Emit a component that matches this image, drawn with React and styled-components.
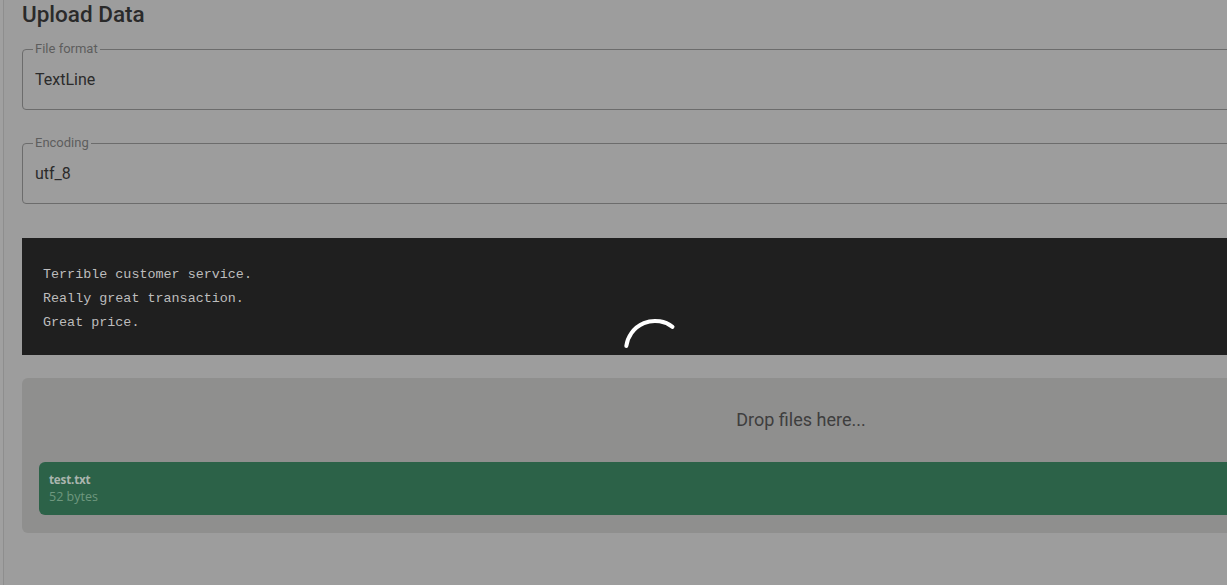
import React from "react";
import styled, { createGlobalStyle } from "styled-components";

const Global = createGlobalStyle`
  html, body { margin: 0; padding: 0; overflow: hidden; background: #9d9d9d; }
  body { font-family: Roboto, "Noto Sans", sans-serif; width: 1227px; height: 585px; }
  #root { height: 585px; }
`;

const Shell = styled.div`
  display: flex;
  height: 585px;
  position: relative;
`;

const Rail = styled.div`
  width: 3px;
  flex: none;
  background: #a0a0a0;
  border-right: 1px solid #8e8e8e;
`;

const Main = styled.main`
  flex: none;
  width: 1558px;
  padding: 0 0 0 18px;
  display: flex;
  flex-direction: column;
`;

const Title = styled.h2`
  margin: 0;
  font-size: 22.5px;
  font-weight: 500;
  line-height: 28px;
  color: #2a2a2a;
`;

const Stack = styled.div`
  display: flex;
  flex-direction: column;
  gap: 27px;
  margin-top: 15px;
`;

const Field = styled.fieldset`
  margin: 0;
  padding: 0 12px 20px;
  min-width: 0;
  border: 1px solid #6c6c6c;
  border-radius: 4px;
`;

const Legend = styled.legend`
  padding: 0 2px;
  margin-left: -2px;
  font-size: 13px;
  line-height: 12px;
  color: #5d5d5d;
`;

const Value = styled.div`
  font-size: 16px;
  line-height: 19px;
  margin-top: 15px;
  color: #2b2b2b;
`;

const Code = styled.pre`
  margin: 34px 0 0;
  background: #1f1f1f;
  color: #bdbdbd;
  font-family: "Liberation Mono", "DejaVu Sans Mono", monospace;
  font-size: 13.4px;
  line-height: 24px;
  padding: 25px 21px 20px;
`;

const Drop = styled.div`
  margin-top: 23px;
  background: #8f8f8e;
  border-radius: 6px;
  padding: 29px 0 18px 17px;
  display: flex;
  flex-direction: column;
`;

const DropText = styled.div`
  text-align: center;
  font-size: 18px;
  line-height: 26px;
  color: #3e3e3e;
  margin-bottom: 29px;
  padding-right: 17px;
`;

const FileCard = styled.div`
  background: #2c6248;
  border-radius: 6px;
  padding: 9px 10px 10px;
  font-family: "Open Sans", "Noto Sans", sans-serif;
  font-size: 12.5px;
  line-height: 17px;
`;

const FileName = styled.div`
  font-weight: 700;
  font-size: 11.7px;
  color: #aab5ae;
  letter-spacing: -0.2px;
`;

const FileSize = styled.div`
  color: #6f987f;
`;

const Spinner = styled.svg`
  position: absolute;
  left: 620px;
  top: 315px;
  width: 70px;
  height: 70px;
`;

export default function App() {
  return (
    <>
      <Global />
      <Shell>
        <Rail />
        <Main>
          <Title>Upload Data</Title>
          <Stack>
            <Field>
              <Legend>File format</Legend>
              <Value>TextLine</Value>
            </Field>
            <Field>
              <Legend>Encoding</Legend>
              <Value>utf_8</Value>
            </Field>
          </Stack>
          <Code>
{`Terrible customer service.
Really great transaction.
Great price.`}
          </Code>
          <Drop>
            <DropText>Drop files here...</DropText>
            <FileCard>
              <FileName>test.txt</FileName>
              <FileSize>52 bytes</FileSize>
            </FileCard>
          </Drop>
        </Main>
        <Spinner viewBox="0 0 70 70">
          <path
            d="M6.3 31 A29 29 0 0 1 52.5 11.8"
            fill="none"
            stroke="#ffffff"
            strokeWidth="4"
            strokeLinecap="round"
          />
        </Spinner>
      </Shell>
    </>
  );
}
